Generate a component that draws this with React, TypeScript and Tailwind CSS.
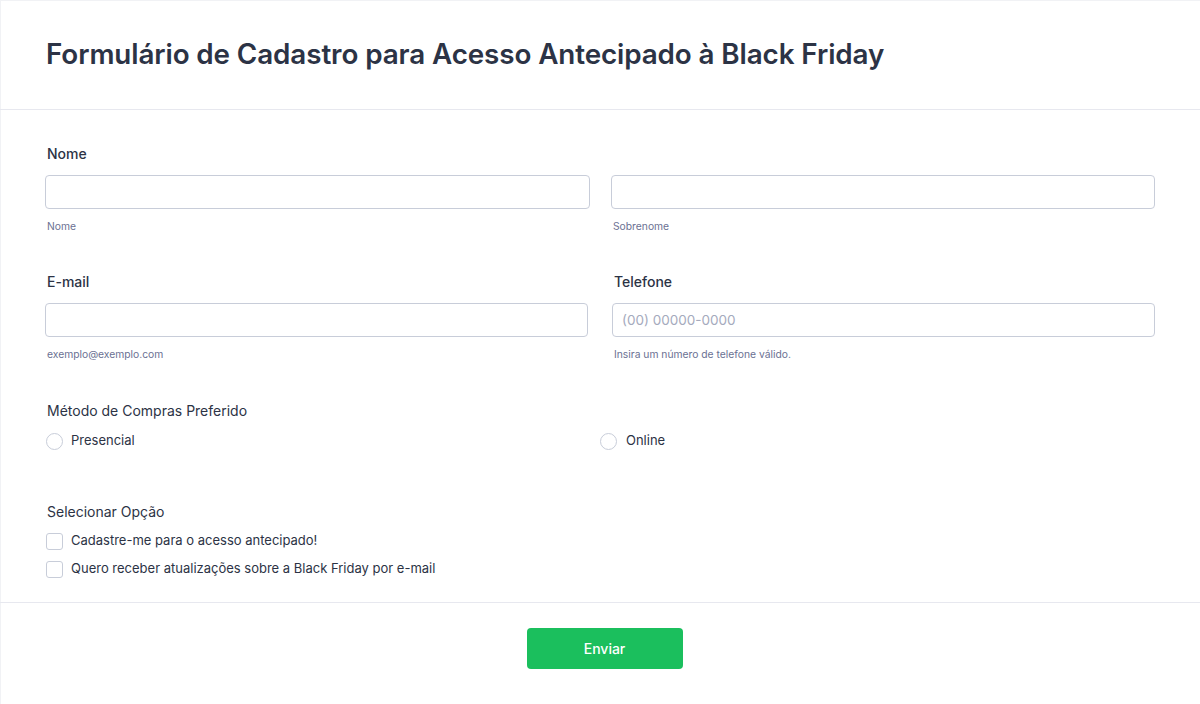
import React from "react";

const Label = ({ children }: { children: React.ReactNode }) => (
  <div className="text-[14px] leading-[20px] font-medium text-[#2c3345]">{children}</div>
);

const Sub = ({ children }: { children: React.ReactNode }) => (
  <div className="mt-[10px] text-[10.3px] leading-[14px] text-[#6b7193]">{children}</div>
);

const Input = ({ placeholder }: { placeholder?: string }) => (
  <div className="h-[34px] w-full rounded-[4px] border border-[#c8cdd9] bg-white px-[9px] flex items-center text-[13.5px] text-[#a5aabd]">
    {placeholder}
  </div>
);

export default function App() {
  return (
    <div
      className="w-[1200px] h-[704px] bg-white shadow-[inset_1px_1px_0_#f1f2f5] overflow-hidden"
      style={{ fontFamily: "Inter, 'Noto Sans', sans-serif" }}
    >
      <div className="h-[110px] border-b border-[#e7e8ef] flex items-center px-[46px]">
        <h1 className="text-[27.8px] font-semibold text-[#2c3345] tracking-[-0.1px]">
          Formulário de Cadastro para Acesso Antecipado à Black Friday
        </h1>
      </div>

      <div className="px-[45px] pt-[34px] pb-[23px] border-b border-[#e7e8ef]">
        <div className="pl-[2px]">
          <Label>Nome</Label>
        </div>
        <div className="mt-[11px] grid grid-cols-[545px_544px] gap-x-[21px]">
          <div>
            <Input />
            <div className="pl-[2px]"><Sub>Nome</Sub></div>
          </div>
          <div>
            <Input />
            <div className="pl-[2px]"><Sub>Sobrenome</Sub></div>
          </div>
        </div>

        <div className="mt-[39px] grid grid-cols-[543px_543px] gap-x-[24px]">
          <div>
            <div className="pl-[2px]"><Label>E-mail</Label></div>
            <div className="mt-[11px]"><Input /></div>
            <div className="pl-[2px]"><Sub>exemplo@exemplo.com</Sub></div>
          </div>
          <div>
            <div className="pl-[2px]"><Label>Telefone</Label></div>
            <div className="mt-[11px]"><Input placeholder="(00) 00000-0000" /></div>
            <div className="pl-[2px]"><Sub>Insira um número de telefone válido.</Sub></div>
          </div>
        </div>

        <div className="mt-[40px] pl-[2px]">
          <div className="text-[14px] leading-[20px] text-[#2c3345]">Método de Compras Preferido</div>
          <div className="mt-[10px] flex -ml-[1px]">
            <div className="flex items-center h-[20px] w-[554px]">
              <span className="w-[17px] h-[17px] rounded-full border border-[#c8cdd9] bg-white shrink-0" />
              <span className="ml-[8px] text-[13px] text-[#2c3345]">Presencial</span>
            </div>
            <div className="flex items-center h-[20px]">
              <span className="w-[17px] h-[17px] rounded-full border border-[#c8cdd9] bg-white shrink-0" />
              <span className="ml-[9px] text-[13px] text-[#2c3345]">Online</span>
            </div>
          </div>
        </div>

        <div className="mt-[51px] pl-[2px]">
          <div className="text-[14px] leading-[20px] text-[#2c3345]">Selecionar Opção</div>
          <div className="mt-[9px] flex flex-col gap-[8px] -ml-[1px]">
            <div className="flex items-center h-[20px]">
              <span className="w-[17px] h-[17px] rounded-[3px] border border-[#c8cdd9] bg-white shrink-0" />
              <span className="ml-[8px] text-[13px] text-[#2c3345]">Cadastre-me para o acesso antecipado!</span>
            </div>
            <div className="flex items-center h-[20px]">
              <span className="w-[17px] h-[17px] rounded-[3px] border border-[#c8cdd9] bg-white shrink-0" />
              <span className="ml-[8px] text-[13px] text-[#2c3345]">Quero receber atualizações sobre a Black Friday por e-mail</span>
            </div>
          </div>
        </div>
      </div>

      <div className="flex justify-center pt-[25px] pl-[9px]">
        <button className="w-[156px] h-[41px] rounded-[4px] bg-[#1bbf5d] text-white text-[14px] font-medium">
          Enviar
        </button>
      </div>
    </div>
  );
}
